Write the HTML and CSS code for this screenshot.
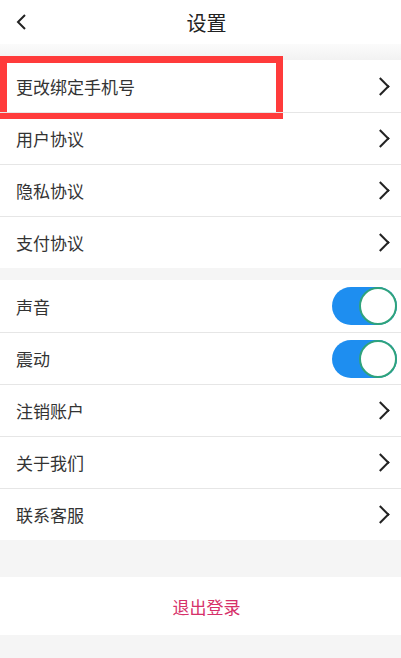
FILE: index.html
```html
<!DOCTYPE html>
<html lang="zh-CN">
<head>
  <meta charset="UTF-8">
  <meta name="viewport" content="width=device-width, initial-scale=1.0">
  <link rel="stylesheet" href="styles.css">
  <title>设置</title>
</head>
<body>
<div class="header">
  <svg class="back" width="12" height="16" viewBox="0 0 12 16"><path d="M9 1 L2 8 L9 15" fill="none" stroke="#222" stroke-width="2"/></svg>
  <span class="title">设置</span>
</div>
<div class="gap top"></div>
<div class="group">
  <div class="row marked">更改绑定手机号<i class="arrow"></i></div>
  <div class="row">用户协议<i class="arrow"></i></div>
  <div class="row">隐私协议<i class="arrow"></i></div>
  <div class="row">支付协议<i class="arrow"></i></div>
</div>
<div class="gap mid"></div>
<div class="group">
  <div class="row">声音<span class="switch"><span class="knob"></span></span></div>
  <div class="row">震动<span class="switch"><span class="knob"></span></span></div>
  <div class="row">注销账户<i class="arrow"></i></div>
  <div class="row">关于我们<i class="arrow"></i></div>
  <div class="row">联系客服<i class="arrow"></i></div>
</div>
<div class="gap big"></div>
<div class="logout">退出登录</div>
</body>
</html>
```
FILE: styles.css
```css
body{
  margin:0;
  background:#f5f5f5;
  font-family:"Noto Sans CJK SC","Noto Sans",sans-serif;
  color:#333;
}
.header{
  height:44px;
  background:#fff;
  display:flex;
  align-items:center;
  justify-content:center;
  padding-left:12px;
  position:relative;
}
.back{
  position:absolute;
  left:16px;
  top:14px;
}
.title{
  font-size:20px;
  color:#222;
}
.gap.top{ height:16px; background:linear-gradient(#fbfbfb,#f2f2f2); }
.gap.mid{ height:12px; }
.gap.big{ height:37px; }
.group{
  background:#fff;
}
.row{
  height:52px;
  display:flex;
  align-items:center;
  justify-content:space-between;
  padding:0 4px 0 16px;
  font-size:17px;
  border-top:1px solid #e6e6e6;
  box-sizing:border-box;
  position:relative;
}
.row:first-child{
  border-top:none;
}
.marked::before{
  content:"";
  position:absolute;
  left:0;
  top:-4px;
  width:283px;
  height:63px;
  border:7px solid #ff3b3b;
  box-sizing:border-box;
}
.arrow{
  width:11px;
  height:11px;
  border-top:2px solid #222;
  border-right:2px solid #222;
  transform:rotate(45deg);
  margin-right:10px;
}
.switch{
  width:65px;
  height:38px;
  border-radius:19px;
  background:#1e8ef0;
  display:flex;
  justify-content:flex-end;
}
.knob{
  width:38px;
  height:38px;
  border-radius:50%;
  background:#fff;
  border:2px solid #2fa37c;
  box-sizing:border-box;
}
.logout{
  height:58px;
  background:#fff;
  display:flex;
  align-items:center;
  justify-content:center;
  padding-left:12px;
  font-size:17px;
  color:#d6306a;
}
```
